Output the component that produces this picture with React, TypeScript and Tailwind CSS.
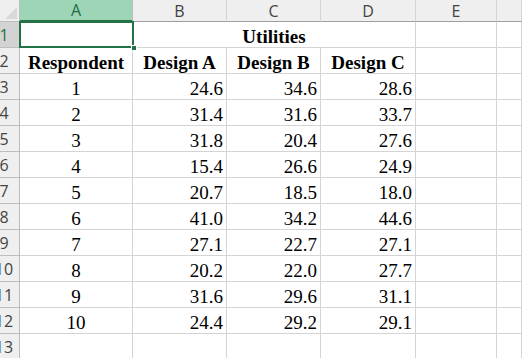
import React from "react";

const COLS = ["A", "B", "C", "D", "E", ""];

// respondent, design A, design B, design C
const DATA: [number, string, string, string][] = [
  [1, "24.6", "34.6", "28.6"],
  [2, "31.4", "31.6", "33.7"],
  [3, "31.8", "20.4", "27.6"],
  [4, "15.4", "26.6", "24.9"],
  [5, "20.7", "18.5", "18.0"],
  [6, "41.0", "34.2", "44.6"],
  [7, "27.1", "22.7", "27.1"],
  [8, "20.2", "22.0", "27.7"],
  [9, "31.6", "29.6", "31.1"],
  [10, "24.4", "29.2", "29.1"],
];

const grid = "grid grid-cols-[20px_113px_94px_94px_95px_81px_1fr]";
const cell = "h-[26px] border-r border-b border-[#d4d4d4] flex items-end overflow-hidden whitespace-nowrap";
const serif = "font-['Liberation_Serif','Times_New_Roman',serif] text-[19px] leading-[21px] text-black";

function RowHead({ n, active }: { n: number; active?: boolean }) {
  return (
    <div
      className={`h-[26px] border-r border-b border-[#bdbdbd] flex items-center overflow-hidden ${
        active ? "bg-[#d3d3d3] text-[#217346]" : "bg-[#efefef] text-[#444]"
      }`}
    >
      <span className="ml-[-16px] w-[40px] shrink-0 text-center font-['Open_Sans',sans-serif] text-[16px] leading-none">
        {n}
      </span>
    </div>
  );
}

export default function App() {
  return (
    <div className="w-[522px] h-[358px] overflow-hidden bg-white select-none">
      {/* column headers */}
      <div className={`${grid} h-[22px]`}>
        <div className="bg-[#efefef] border-r border-b border-[#bdbdbd] flex items-end justify-end p-[2px]">
          <svg width="12" height="12" viewBox="0 0 12 12">
            <path d="M12 0 L12 12 L0 12 Z" fill="#d9d9d9" />
          </svg>
        </div>
        {COLS.map((c, i) => (
          <div
            key={i}
            className={`border-r flex items-center justify-center font-['Open_Sans',sans-serif] text-[16px] leading-none ${
              i === 0
                ? "bg-[#9fd5b7] text-[#1e6b41] border-[#bdbdbd] border-b-2 border-b-[#217346]"
                : "bg-[#efefef] text-[#444] border-[#d4d4d4] border-b border-b-[#9e9e9e]"
            }`}
          >
            {c}
          </div>
        ))}
      </div>

      {/* row 1 */}
      <div className={grid}>
        <RowHead n={1} active />
        <div className="h-[26px] border-b border-[#d4d4d4] relative">
          <div className="absolute inset-[-1px_-1px_-1px_-1px] border-2 border-[#217346]" />
          <div className="absolute right-[-4px] bottom-[-4px] w-[6px] h-[6px] bg-[#217346] border border-white" />
        </div>
        <div className={`${cell} col-span-3 justify-center font-bold ${serif}`}>Utilities</div>
        <div className={cell} />
        <div className={cell} />
      </div>

      {/* row 2 */}
      <div className={grid}>
        <RowHead n={2} />
        <div className={`${cell} justify-center font-bold ${serif}`}>Respondent</div>
        <div className={`${cell} justify-center font-bold ${serif}`}>Design A</div>
        <div className={`${cell} justify-center font-bold ${serif}`}>Design B</div>
        <div className={`${cell} justify-center font-bold ${serif}`}>Design C</div>
        <div className={cell} />
        <div className={cell} />
      </div>

      {DATA.map(([r, a, b, c], i) => (
        <div key={r} className={grid}>
          <RowHead n={i + 3} />
          <div className={`${cell} justify-center ${serif}`}>{r}</div>
          <div className={`${cell} justify-end pr-[3px] ${serif}`}>{a}</div>
          <div className={`${cell} justify-end pr-[3px] ${serif}`}>{b}</div>
          <div className={`${cell} justify-end pr-[3px] ${serif}`}>{c}</div>
          <div className={cell} />
          <div className={cell} />
        </div>
      ))}

      {/* row 13 */}
      <div className={grid}>
        <RowHead n={13} />
        <div className={cell} />
        <div className={cell} />
        <div className={cell} />
        <div className={cell} />
        <div className={cell} />
        <div className={cell} />
      </div>
    </div>
  );
}
